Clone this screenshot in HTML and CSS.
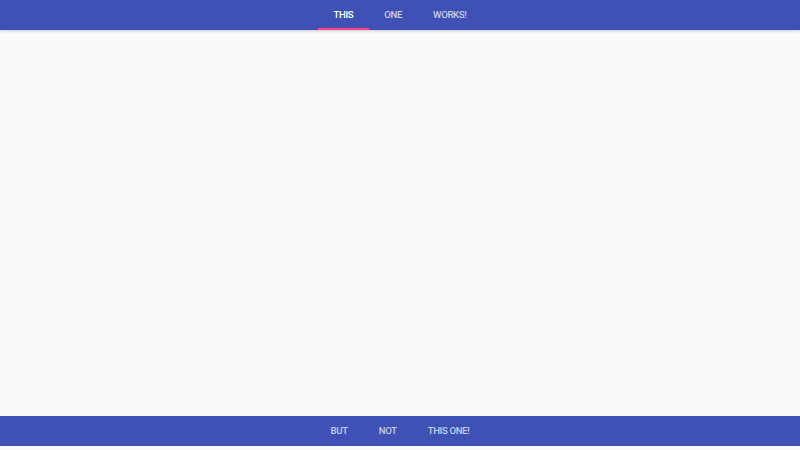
FILE: index.html
```html
<!DOCTYPE html>
<html>
<head>
<meta charset="utf-8">
<link rel="stylesheet" href="styles.css">
</head>
<body>
<div class="page">
  <nav class="bar top">
    <div class="tab active">THIS</div>
    <div class="tab">ONE</div>
    <div class="tab">WORKS!</div>
  </nav>
  <main class="content"></main>
  <nav class="bar bottom">
    <div class="tab">BUT</div>
    <div class="tab">NOT</div>
    <div class="tab">THIS ONE!</div>
  </nav>
</div>
</body>
</html>
```
FILE: styles.css
```css
html, body {
  margin: 0;
  padding: 0;
  height: 100%;
  background: #fafafa;
}
.page {
  height: 450px;
  display: flex;
  flex-direction: column;
  font-family: Roboto, "Liberation Sans", sans-serif;
}
.bar {
  height: 30px;
  flex: 0 0 30px;
  background: #3f51b5;
  display: flex;
  justify-content: center;
  align-items: stretch;
}
.top {
  box-shadow: 0 1px 3px rgba(0,0,0,0.2);
}
.top .tab {
  padding-bottom: 2px;
}
.bottom {
  margin-bottom: 4px;
}
.bottom .tab {
  padding-bottom: 1px;
}
.content {
  flex: 1;
}
.tab {
  position: relative;
  padding: 0 15.5px;
  display: flex;
  align-items: center;
  justify-content: center;
  font-size: 9.6px;
  font-weight: 500;
  letter-spacing: -0.35px;
  color: rgba(255,255,255,0.72);
}
.tab.active {
  color: #fff;
}
.tab.active::after {
  content: "";
  position: absolute;
  left: 0;
  right: 0;
  bottom: 0;
  height: 2px;
  background: #ff4081;
}
```
